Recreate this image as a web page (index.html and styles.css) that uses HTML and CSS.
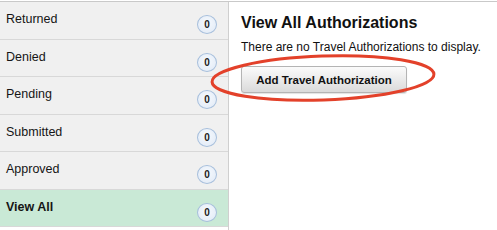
FILE: index.html
```
<!DOCTYPE html>
<html>
<head>
<meta charset="utf-8">
<title>Travel Authorizations</title>
<link rel="stylesheet" href="styles.css"></head><body>
<div class="page">
    <ul class="status-list">
        <li class="status"><span class="label">Returned</span><span class="count">0</span></li>
        <li class="status"><span class="label">Denied</span><span class="count">0</span></li>
        <li class="status"><span class="label">Pending</span><span class="count">0</span></li>
        <li class="status"><span class="label">Submitted</span><span class="count">0</span></li>
        <li class="status"><span class="label">Approved</span><span class="count">0</span></li>
        <li class="status active"><span class="label">View All</span><span class="count">0</span></li>
    </ul>

    <div class="content">
        <h2>View All Authorizations</h2>
        <p>There are no Travel Authorizations to display.</p>
        <button class="add-btn">Add Travel Authorization</button>
    </div>

    <!-- red marker drawn over the button -->
    <svg class="marker" viewBox="0 0 497 230" width="497" height="230">
        <ellipse cx="323" cy="78" rx="111" ry="22" transform="rotate(-2 323 78)"
                 fill="none" stroke="#e3412a" stroke-width="3"></ellipse>
    </svg>
</div>
</body></html>
```

FILE: styles.css
```
body {
    margin: 0;
    font-family: "Liberation Sans", Arial, sans-serif;
    color: #111;
    background: #fff;
}

.page {
    position: relative;
    display: flex;
    height: 229px;
    margin-top: 1px;
    border-top: 1px solid #c9c9c9;
    overflow: hidden;
}

.status-list {
    list-style: none;
    margin: 0;
    padding: 0;
    width: 228px;
    flex-shrink: 0;
    border-right: 1px solid #cfcfcf;
}

.status {
    box-sizing: border-box;
    height: 37.5px;
    display: flex;
    justify-content: space-between;
    align-items: flex-start;
    padding: 10px 11px 0 6px;
    background: #f0f0f0;
    border-bottom: 1px solid #d8d8d8;
}

.status.active {
    background: #c9e9d6;
}

.status.active .label {
    font-weight: bold;
}

.label {
    font-size: 12.5px;
    line-height: 15px;
    color: #151515;
}

.count {
    box-sizing: border-box;
    width: 20px;
    height: 19px;
    margin-top: 3px;
    border-radius: 50%;
    border: 1px solid #a7bfdc;
    background: radial-gradient(circle at 50% 40%, #f6f9fd, #dfe9f6);
    font-size: 10px;
    font-weight: bold;
    line-height: 17px;
    text-align: center;
    color: #222;
}

.content {
    padding-left: 12px;
}

.content h2 {
    margin: 10.5px 0 0;
    font-size: 16px;
    line-height: 20px;
}

.content p {
    margin: 6.5px 0 0;
    font-size: 12px;
    line-height: 16px;
}

.add-btn {
    display: block;
    box-sizing: border-box;
    width: 166px;
    height: 27px;
    margin-top: 11px;
    padding: 0;
    border: 1px solid #b4b4b4;
    border-radius: 3px;
    background: linear-gradient(#fbfbfb, #e9e9e9 55%, #dadada);
    box-shadow: 0 1px 1px rgba(0, 0, 0, 0.12);
    font-family: "Liberation Sans", Arial, sans-serif;
    font-size: 11.5px;
    font-weight: bold;
    color: #111;
}

.marker {
    position: absolute;
    left: 0;
    top: -2px;
    pointer-events: none;
}
```
